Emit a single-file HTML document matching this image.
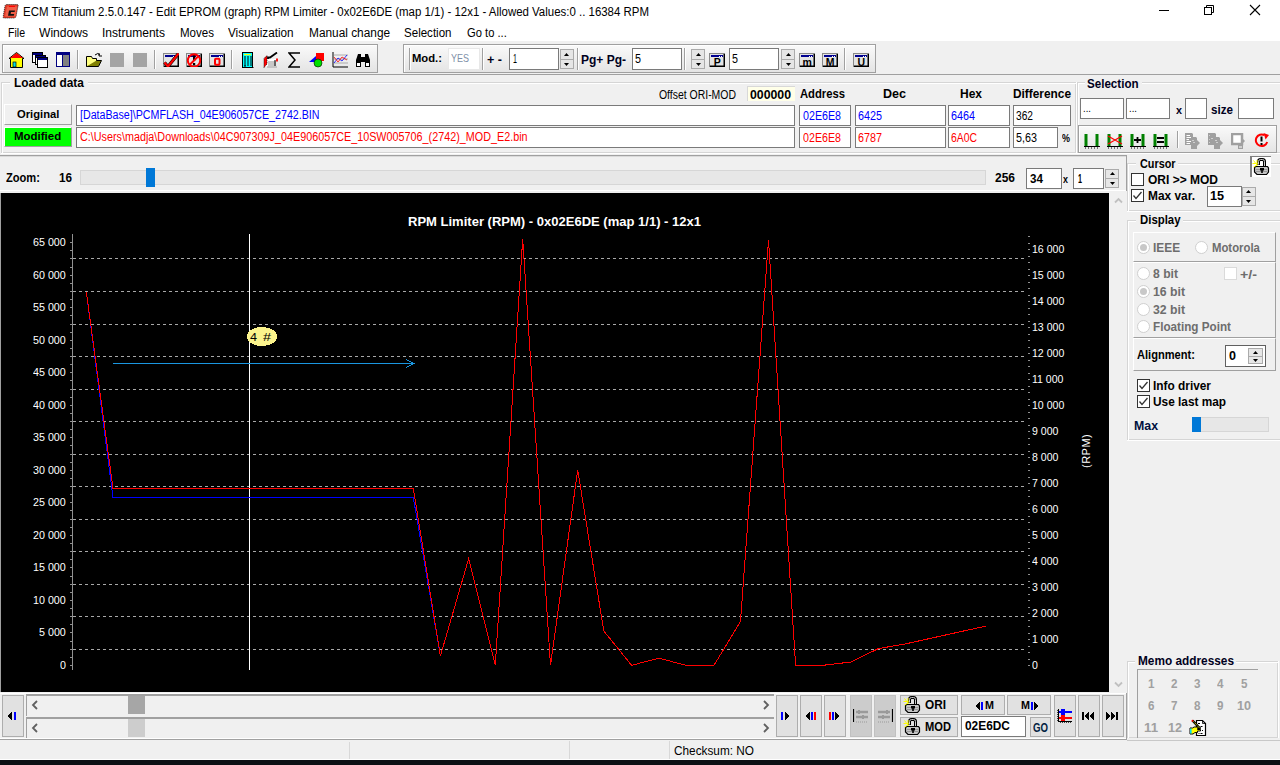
<!DOCTYPE html><html><head><meta charset="utf-8"><style>html,body{margin:0;padding:0;width:1280px;height:765px;overflow:hidden;background:#f0f0f0;font-family:"Liberation Sans",sans-serif;}body{position:relative}</style></head><body>
<div style="position:absolute;left:0px;top:0px;width:1280px;height:41px;box-sizing:border-box;background:#fff"></div>
<div style="position:absolute;left:23.00px;top:5.82px;font-size:12.5px;line-height:12.5px;font-weight:normal;color:#000;white-space:nowrap;transform-origin:0 0;transform:scale(0.9160,1.0);">ECM Titanium 2.5.0.147 - Edit EPROM (graph) RPM Limiter - 0x02E6DE (map 1/1) - 12x1 - Allowed Values:0 .. 16384 RPM</div>
<svg style="position:absolute;left:2px;top:3px;shape-rendering:auto" width="17" height="16" viewBox="0 0 17 16" shape-rendering="crispEdges"><path d="M4.5 1.5H15.5Q16.5 1.5 16 3L14 13.5Q13.5 15 12 15H2Q0.8 15 1.2 13.5L3 3Q3.3 1.5 4.5 1.5z" fill="#e23a26" stroke="#222" stroke-width="0.8" stroke-dasharray="1.2 0.8"/><path d="M5 3.5H15L13.5 13.5H3z" fill="#f06048"/><path d="M7 3.5H13" stroke="#ff0000" stroke-width="1"/><path d="M7 7.5H13L12.6 9H9L8.6 11H12.2L11.8 12.8H6z" fill="#111"/></svg>
<div style="position:absolute;left:1159px;top:10px;width:10px;height:1px;box-sizing:border-box;background:#000"></div>
<svg style="position:absolute;left:1200px;top:2px;shape-rendering:auto" width="18" height="16" viewBox="0 0 18 16" shape-rendering="crispEdges"><rect x="4.5" y="5.5" width="7" height="7" fill="none" stroke="#000"/><path d="M6.5 5.5v-2h7v7h-2" fill="none" stroke="#000"/></svg>
<svg style="position:absolute;left:1248px;top:3px;shape-rendering:auto" width="14" height="14" viewBox="0 0 14 14" shape-rendering="crispEdges"><path d="M2 2L12 12M12 2L2 12" stroke="#000" stroke-width="1.1"/></svg>
<div style="position:absolute;left:8.00px;top:26.82px;font-size:12.5px;line-height:12.5px;font-weight:normal;color:#000;white-space:nowrap;transform-origin:0 0;transform:scale(0.8458,1.0);">File</div>
<div style="position:absolute;left:39.00px;top:26.82px;font-size:12.5px;line-height:12.5px;font-weight:normal;color:#000;white-space:nowrap;transform-origin:0 0;transform:scale(0.9665,1.0);">Windows</div>
<div style="position:absolute;left:102.00px;top:26.82px;font-size:12.5px;line-height:12.5px;font-weight:normal;color:#000;white-space:nowrap;transform-origin:0 0;transform:scale(0.9648,1.0);">Instruments</div>
<div style="position:absolute;left:180.00px;top:26.82px;font-size:12.5px;line-height:12.5px;font-weight:normal;color:#000;white-space:nowrap;transform-origin:0 0;transform:scale(0.9239,1.0);">Moves</div>
<div style="position:absolute;left:228.00px;top:26.82px;font-size:12.5px;line-height:12.5px;font-weight:normal;color:#000;white-space:nowrap;transform-origin:0 0;transform:scale(0.9371,1.0);">Visualization</div>
<div style="position:absolute;left:308.50px;top:26.82px;font-size:12.5px;line-height:12.5px;font-weight:normal;color:#000;white-space:nowrap;transform-origin:0 0;transform:scale(0.9485,1.0);">Manual change</div>
<div style="position:absolute;left:404.00px;top:26.82px;font-size:12.5px;line-height:12.5px;font-weight:normal;color:#000;white-space:nowrap;transform-origin:0 0;transform:scale(0.9241,1.0);">Selection</div>
<div style="position:absolute;left:466.50px;top:26.82px;font-size:12.5px;line-height:12.5px;font-weight:normal;color:#000;white-space:nowrap;transform-origin:0 0;transform:scale(0.8944,1.0);">Go to ...</div>
<div style="position:absolute;left:0px;top:41px;width:1280px;height:34px;box-sizing:border-box;background:#f0f0f0"></div>
<div style="position:absolute;left:0px;top:74px;width:1280px;height:1px;box-sizing:border-box;background:#a0a0a0"></div>
<div style="position:absolute;left:2px;top:44px;width:376px;height:29px;box-sizing:border-box;border:1px solid #a0a0a0;background:#fff"></div>
<div style="position:absolute;left:3px;top:45px;width:374px;height:27px;box-sizing:border-box;border-left:1px solid #fff;border-top:1px solid #fff;background:linear-gradient(#f9f9f9,#e4e4e4)"></div>
<div style="position:absolute;left:403px;top:44px;width:473px;height:29px;box-sizing:border-box;border:1px solid #a0a0a0;background:#fff"></div>
<div style="position:absolute;left:404px;top:45px;width:471px;height:27px;box-sizing:border-box;border-left:1px solid #fff;border-top:1px solid #fff;background:linear-gradient(#f9f9f9,#e4e4e4)"></div>
<div style="position:absolute;left:77px;top:50px;width:1px;height:19px;box-sizing:border-box;background:#a0a0a0"></div>
<div style="position:absolute;left:78px;top:50px;width:1px;height:19px;box-sizing:border-box;background:#fff"></div>
<div style="position:absolute;left:154px;top:50px;width:1px;height:19px;box-sizing:border-box;background:#a0a0a0"></div>
<div style="position:absolute;left:155px;top:50px;width:1px;height:19px;box-sizing:border-box;background:#fff"></div>
<div style="position:absolute;left:231px;top:50px;width:1px;height:19px;box-sizing:border-box;background:#a0a0a0"></div>
<div style="position:absolute;left:232px;top:50px;width:1px;height:19px;box-sizing:border-box;background:#fff"></div>
<svg style="position:absolute;left:9px;top:52px;shape-rendering:auto" width="16" height="16" viewBox="0 0 16 16" shape-rendering="crispEdges"><path d="M7.5 0.5L15 6.5H13.5V15.5H1.5V6.5H0z" fill="#ffff00" stroke="#000"/><path d="M7.5 1L14 6H1z" fill="#f00"/><rect x="4" y="10" width="3" height="5" fill="#00e0e0" stroke="#000" stroke-width="0.7"/></svg>
<svg style="position:absolute;left:32px;top:52px;shape-rendering:auto" width="16" height="16" viewBox="0 0 16 16" shape-rendering="crispEdges"><rect x="0.5" y="0.5" width="10" height="10" fill="#fff" stroke="#000"/><rect x="1" y="1" width="9" height="2" fill="#000080"/><rect x="3.5" y="3.5" width="10" height="9" fill="#fff" stroke="#000"/><rect x="4" y="4" width="9" height="2" fill="#000080"/><rect x="5.5" y="5.5" width="10" height="10" fill="#fff" stroke="#000"/><rect x="6" y="6" width="9" height="2" fill="#000080"/></svg>
<svg style="position:absolute;left:56px;top:52px;shape-rendering:auto" width="16" height="16" viewBox="0 0 16 16" shape-rendering="crispEdges"><rect x="0.5" y="0.5" width="13" height="14" fill="#fff" stroke="#000080"/><rect x="1" y="1" width="12" height="2" fill="#000080"/><rect x="7" y="3" width="6" height="11" fill="#808080"/><rect x="6" y="1" width="1" height="14" fill="#000080"/></svg>
<svg style="position:absolute;left:86px;top:52px;shape-rendering:auto" width="16" height="16" viewBox="0 0 16 16" shape-rendering="crispEdges"><path d="M0.5 6.5V14.5H12.5L15.5 8.5H3.5L0.5 14.5" fill="#808000" stroke="#000"/><path d="M0.5 14.5V4.5H5.5L6.5 6.5H10.5V8.5" fill="#ffff80" stroke="#000"/><path d="M9 3Q12 0 14 3" fill="none" stroke="#000"/><path d="M13 1V4H16" fill="none" stroke="#000"/></svg>
<svg style="position:absolute;left:242px;top:52px;shape-rendering:auto" width="16" height="16" viewBox="0 0 16 16" shape-rendering="crispEdges"><rect x="0.5" y="0.5" width="10" height="15" fill="#00ffff" stroke="#000"/><rect x="1" y="15" width="10.5" height="1" fill="#000"/><rect x="2" y="2" width="7" height="1.2" fill="#ffff00"/><path d="M3 4V14M6 4V14M9 4V14" stroke="#000" stroke-width="1"/><path d="M2 14H4" stroke="#000"/></svg>
<svg style="position:absolute;left:263px;top:52px;shape-rendering:auto" width="16" height="16" viewBox="0 0 16 16" shape-rendering="crispEdges"><path d="M4 14.5L6 13.5H13V7H6V3L1 6V15z" fill="#fff"/><path d="M1 15.5V6.5L4 3.5V12z" fill="#ff0000" stroke="#000" stroke-width="0.8" stroke-dasharray="1 1"/><rect x="5" y="9" width="8" height="5" fill="#c8c8c8"/><path d="M4 15H14" stroke="#a0a0a0" stroke-width="1"/><path d="M5 7V5.5H7L14 0.5" fill="none" stroke="#000" stroke-width="1.8"/><path d="M14 6.5V9.5" stroke="#ff0000" stroke-width="1.8"/><path d="M12 8V14" stroke="#000" stroke-width="1"/></svg>
<svg style="position:absolute;left:288px;top:52px;shape-rendering:auto" width="16" height="16" viewBox="0 0 16 16" shape-rendering="crispEdges"><path d="M12 1H1L7 8L1 15H12" fill="none" stroke="#000" stroke-width="1.5"/></svg>
<svg style="position:absolute;left:309px;top:52px;shape-rendering:auto" width="16" height="16" viewBox="0 0 16 16" shape-rendering="crispEdges"><rect x="7" y="1" width="8" height="8" fill="#f00"/><path d="M0 10L7 4V10z" fill="#0000ff"/><circle cx="9" cy="11" r="4" fill="#00e000" stroke="#000" stroke-width="0.6"/></svg>
<svg style="position:absolute;left:332px;top:52px;shape-rendering:auto" width="16" height="16" viewBox="0 0 16 16" shape-rendering="crispEdges"><path d="M1 0V15H16" fill="none" stroke="#000"/><path d="M1 3H16M1 7H16M1 11H16" stroke="#808080" stroke-width="0.6"/><path d="M2 11L6 6L10 9L15 3" fill="none" stroke="#00f" stroke-width="0.8"/><path d="M2 5L6 10L10 5L15 8" fill="none" stroke="#f00" stroke-width="0.8"/></svg>
<svg style="position:absolute;left:355px;top:52px;shape-rendering:auto" width="16" height="16" viewBox="0 0 16 16" shape-rendering="crispEdges"><path d="M1 15V8L3 2H6V15z M10 15V2H13L15 8V15z" fill="#000"/><rect x="6" y="5" width="4" height="5" fill="#000"/><rect x="2" y="11" width="3" height="3" fill="#fff"/><rect x="11" y="11" width="3" height="3" fill="#fff"/></svg>
<svg style="position:absolute;left:110px;top:53px;shape-rendering:auto" width="16" height="16" viewBox="0 0 16 16" shape-rendering="crispEdges"><rect x="0" y="0" width="14" height="14" fill="#a4a4a4"/></svg>
<svg style="position:absolute;left:133px;top:53px;shape-rendering:auto" width="16" height="16" viewBox="0 0 16 16" shape-rendering="crispEdges"><rect x="0" y="0" width="14" height="14" fill="#a4a4a4"/></svg>
<svg style="position:absolute;left:163px;top:53px;shape-rendering:auto" width="16" height="14" viewBox="0 0 16 14" shape-rendering="crispEdges"><rect x="0" y="0" width="16" height="14" fill="#888"/><rect x="1" y="1" width="15" height="13" fill="#000"/><rect x="1" y="1" width="13.5" height="11.5" fill="#e4e4e4"/><rect x="2" y="2" width="12" height="2" fill="#000090"/><rect x="10" y="3" width="1" height="1" fill="#fff"/><rect x="12" y="3" width="1" height="1" fill="#fff"/><path d="M1.5 9.5L5 13.5L15.5 0.5" fill="none" stroke="#000" stroke-width="3.2"/><path d="M1.5 9.5L5 13.5L15.5 0.5" fill="none" stroke="#f00" stroke-width="2.2"/></svg>
<svg style="position:absolute;left:186px;top:53px;shape-rendering:auto" width="16" height="14" viewBox="0 0 16 14" shape-rendering="crispEdges"><rect x="0" y="0" width="16" height="14" fill="#888"/><rect x="1" y="1" width="15" height="13" fill="#000"/><rect x="1" y="1" width="13.5" height="11.5" fill="#e4e4e4"/><rect x="2" y="2" width="12" height="2" fill="#000090"/><rect x="10" y="3" width="1" height="1" fill="#fff"/><rect x="12" y="3" width="1" height="1" fill="#fff"/><rect x="7" y="1" width="2.2" height="7" fill="#000"/><rect x="7" y="10" width="2.2" height="2.2" fill="#000"/><circle cx="8" cy="7.5" r="6.2" fill="none" stroke="#f00" stroke-width="2"/><path d="M3.5 12L12.5 3" stroke="#f00" stroke-width="2"/></svg>
<svg style="position:absolute;left:209px;top:53px;shape-rendering:auto" width="16" height="14" viewBox="0 0 16 14" shape-rendering="crispEdges"><rect x="0" y="0" width="16" height="14" fill="#888"/><rect x="1" y="1" width="15" height="13" fill="#000"/><rect x="1" y="1" width="13.5" height="11.5" fill="#e4e4e4"/><rect x="2" y="2" width="12" height="2" fill="#000090"/><rect x="10" y="3" width="1" height="1" fill="#fff"/><rect x="12" y="3" width="1" height="1" fill="#fff"/><rect x="6" y="5.8" width="4.5" height="6" rx="1" fill="none" stroke="#f00" stroke-width="2"/></svg>
<div style="position:absolute;left:409px;top:48px;width:1px;height:22px;box-sizing:border-box;background:#a0a0a0"></div>
<div style="position:absolute;left:410px;top:48px;width:1px;height:22px;box-sizing:border-box;background:#fff"></div>
<div style="position:absolute;left:482px;top:48px;width:1px;height:22px;box-sizing:border-box;background:#a0a0a0"></div>
<div style="position:absolute;left:483px;top:48px;width:1px;height:22px;box-sizing:border-box;background:#fff"></div>
<div style="position:absolute;left:577px;top:48px;width:1px;height:22px;box-sizing:border-box;background:#a0a0a0"></div>
<div style="position:absolute;left:578px;top:48px;width:1px;height:22px;box-sizing:border-box;background:#fff"></div>
<div style="position:absolute;left:684px;top:48px;width:1px;height:22px;box-sizing:border-box;background:#a0a0a0"></div>
<div style="position:absolute;left:685px;top:48px;width:1px;height:22px;box-sizing:border-box;background:#fff"></div>
<div style="position:absolute;left:844px;top:48px;width:1px;height:22px;box-sizing:border-box;background:#a0a0a0"></div>
<div style="position:absolute;left:845px;top:48px;width:1px;height:22px;box-sizing:border-box;background:#fff"></div>
<div style="position:absolute;left:412.00px;top:52.97px;font-size:11.5px;line-height:11.5px;font-weight:bold;color:#000;white-space:nowrap;transform-origin:0 0;transform:scale(0.9772,1.0);">Mod.:</div>
<div style="position:absolute;left:448px;top:48px;width:32px;height:22px;box-sizing:border-box;background:#fff;border:1px solid #e8e8e8"></div>
<div style="position:absolute;left:451.00px;top:53.05px;font-size:11px;line-height:11px;font-weight:normal;color:#8090a8;white-space:nowrap;transform-origin:0 0;transform:scale(0.8182,1.0);">YES</div>
<div style="position:absolute;left:487.00px;top:53.90px;font-size:12px;line-height:12px;font-weight:bold;color:#000020;white-space:nowrap;transform-origin:0 0;transform:scale(1.0490,1.0);">+ -</div>
<div style="position:absolute;left:509px;top:48px;width:50px;height:22px;box-sizing:border-box;background:#fff;border:1px solid #7a7a7a"></div>
<div style="position:absolute;left:513.00px;top:52.90px;font-size:12px;line-height:12px;font-weight:normal;color:#000;white-space:nowrap;transform-origin:0 0;transform:scale(0.5970,1.0);">1</div>
<div style="position:absolute;left:560px;top:49px;width:14px;height:20px;box-sizing:border-box;background:#e6e6e6;border:1px solid #ababab"></div>
<div style="position:absolute;left:560px;top:59px;width:14px;height:1px;box-sizing:border-box;background:#ababab"></div>
<svg style="position:absolute;left:564px;top:53px;shape-rendering:auto" width="5" height="3" viewBox="0 0 5 3" shape-rendering="crispEdges"><path d="M2.5 0L5 3H0z" fill="#000"/></svg>
<svg style="position:absolute;left:564px;top:63px;shape-rendering:auto" width="5" height="3" viewBox="0 0 5 3" shape-rendering="crispEdges"><path d="M0 0H5L2.5 3z" fill="#000"/></svg>
<div style="position:absolute;left:581.00px;top:53.90px;font-size:12px;line-height:12px;font-weight:bold;color:#000020;white-space:nowrap;transform-origin:0 0;transform:scale(1.0000,1.0);">Pg+ Pg-</div>
<div style="position:absolute;left:632px;top:48px;width:50px;height:22px;box-sizing:border-box;background:#fff;border:1px solid #7a7a7a"></div>
<div style="position:absolute;left:635.00px;top:52.90px;font-size:12px;line-height:12px;font-weight:normal;color:#000;white-space:nowrap;transform-origin:0 0;transform:scale(0.8955,1.0);">5</div>
<div style="position:absolute;left:691px;top:49px;width:14px;height:20px;box-sizing:border-box;background:#e6e6e6;border:1px solid #ababab"></div>
<div style="position:absolute;left:691px;top:59px;width:14px;height:1px;box-sizing:border-box;background:#ababab"></div>
<svg style="position:absolute;left:696px;top:53px;shape-rendering:auto" width="5" height="3" viewBox="0 0 5 3" shape-rendering="crispEdges"><path d="M2.5 0L5 3H0z" fill="#000"/></svg>
<svg style="position:absolute;left:696px;top:63px;shape-rendering:auto" width="5" height="3" viewBox="0 0 5 3" shape-rendering="crispEdges"><path d="M0 0H5L2.5 3z" fill="#000"/></svg>
<div style="position:absolute;left:729px;top:48px;width:50px;height:22px;box-sizing:border-box;background:#fff;border:1px solid #7a7a7a"></div>
<div style="position:absolute;left:732.00px;top:52.90px;font-size:12px;line-height:12px;font-weight:normal;color:#000;white-space:nowrap;transform-origin:0 0;transform:scale(0.8955,1.0);">5</div>
<div style="position:absolute;left:781px;top:49px;width:14px;height:20px;box-sizing:border-box;background:#e6e6e6;border:1px solid #ababab"></div>
<div style="position:absolute;left:781px;top:59px;width:14px;height:1px;box-sizing:border-box;background:#ababab"></div>
<svg style="position:absolute;left:786px;top:53px;shape-rendering:auto" width="5" height="3" viewBox="0 0 5 3" shape-rendering="crispEdges"><path d="M2.5 0L5 3H0z" fill="#000"/></svg>
<svg style="position:absolute;left:786px;top:63px;shape-rendering:auto" width="5" height="3" viewBox="0 0 5 3" shape-rendering="crispEdges"><path d="M0 0H5L2.5 3z" fill="#000"/></svg>
<svg style="position:absolute;left:709px;top:53px;shape-rendering:auto" width="16" height="14" viewBox="0 0 16 14" shape-rendering="crispEdges"><rect x="0" y="0" width="16" height="14" fill="#888"/><rect x="1" y="1" width="15" height="13" fill="#000"/><rect x="1" y="1" width="13.5" height="11.5" fill="#e4e4e4"/><rect x="2" y="2" width="12" height="2" fill="#000090"/><rect x="10" y="3" width="1" height="1" fill="#fff"/><rect x="12" y="3" width="1" height="1" fill="#fff"/><text x="8.2" y="12.5" font-family="Liberation Sans" font-weight="bold" font-size="10.5" text-anchor="middle" fill="#000">P</text></svg>
<svg style="position:absolute;left:799px;top:53px;shape-rendering:auto" width="16" height="14" viewBox="0 0 16 14" shape-rendering="crispEdges"><rect x="0" y="0" width="16" height="14" fill="#888"/><rect x="1" y="1" width="15" height="13" fill="#000"/><rect x="1" y="1" width="13.5" height="11.5" fill="#e4e4e4"/><rect x="2" y="2" width="12" height="2" fill="#000090"/><rect x="10" y="3" width="1" height="1" fill="#fff"/><rect x="12" y="3" width="1" height="1" fill="#fff"/><text x="8.2" y="12.5" font-family="Liberation Sans" font-weight="bold" font-size="10.5" text-anchor="middle" fill="#000">m</text></svg>
<svg style="position:absolute;left:822px;top:53px;shape-rendering:auto" width="16" height="14" viewBox="0 0 16 14" shape-rendering="crispEdges"><rect x="0" y="0" width="16" height="14" fill="#888"/><rect x="1" y="1" width="15" height="13" fill="#000"/><rect x="1" y="1" width="13.5" height="11.5" fill="#e4e4e4"/><rect x="2" y="2" width="12" height="2" fill="#000090"/><rect x="10" y="3" width="1" height="1" fill="#fff"/><rect x="12" y="3" width="1" height="1" fill="#fff"/><text x="8.2" y="12.5" font-family="Liberation Sans" font-weight="bold" font-size="10.5" text-anchor="middle" fill="#000">M</text></svg>
<svg style="position:absolute;left:853px;top:53px;shape-rendering:auto" width="16" height="14" viewBox="0 0 16 14" shape-rendering="crispEdges"><rect x="0" y="0" width="16" height="14" fill="#888"/><rect x="1" y="1" width="15" height="13" fill="#000"/><rect x="1" y="1" width="13.5" height="11.5" fill="#e4e4e4"/><rect x="2" y="2" width="12" height="2" fill="#000090"/><rect x="10" y="3" width="1" height="1" fill="#fff"/><rect x="12" y="3" width="1" height="1" fill="#fff"/><text x="8.2" y="12.5" font-family="Liberation Sans" font-weight="bold" font-size="10.5" text-anchor="middle" fill="#000">U</text></svg>
<div style="position:absolute;left:0px;top:75px;width:1280px;height:80px;box-sizing:border-box;background:#f0f0f0"></div>
<div style="position:absolute;left:1px;top:82px;width:1075px;height:71px;box-sizing:border-box;border:1px solid #d5d5d5"></div>
<div style="position:absolute;left:2px;top:83px;width:1075px;height:71px;box-sizing:border-box;border:1px solid #fff;border-right:none;border-bottom:none"></div>
<div style="position:absolute;left:1px;top:153px;width:1076px;height:1px;box-sizing:border-box;background:#fff"></div>
<div style="position:absolute;left:1076px;top:82px;width:1px;height:72px;box-sizing:border-box;background:#fff"></div>
<div style="position:absolute;left:10px;top:79px;width:78px;height:6px;box-sizing:border-box;background:#f0f0f0"></div>
<div style="position:absolute;left:14.00px;top:76.90px;font-size:12px;line-height:12px;font-weight:bold;color:#000;white-space:nowrap;transform-origin:0 0;transform:scale(0.9887,1.0);">Loaded data</div>
<div style="position:absolute;left:4px;top:104px;width:68px;height:21px;box-sizing:border-box;background:#f0f0f0;border:1px solid #fff;border-right-color:#a0a0a0;border-bottom-color:#a0a0a0"></div>
<div style="position:absolute;left:17.00px;top:108.97px;font-size:11.5px;line-height:11.5px;font-weight:bold;color:#000;white-space:nowrap;transform-origin:0 0;transform:scale(0.9747,1.0);">Original</div>
<div style="position:absolute;left:4px;top:127px;width:68px;height:20px;box-sizing:border-box;background:#00ff00;border:1px solid #fff;border-right-color:#a0a0a0;border-bottom-color:#a0a0a0"></div>
<div style="position:absolute;left:14.00px;top:130.97px;font-size:11.5px;line-height:11.5px;font-weight:bold;color:#000;white-space:nowrap;transform-origin:0 0;transform:scale(0.9979,1.0);">Modified</div>
<div style="position:absolute;left:76px;top:105px;width:719px;height:21px;box-sizing:border-box;background:#fff;border:1px solid #7a7a7a"></div>
<div style="position:absolute;left:76px;top:127px;width:719px;height:21px;box-sizing:border-box;background:#fff;border:1px solid #7a7a7a"></div>
<div style="position:absolute;left:79.50px;top:109.40px;font-size:12px;line-height:12px;font-weight:normal;color:#0000ff;white-space:nowrap;transform-origin:0 0;transform:scale(0.8887,1.0);">[DataBase]\PCMFLASH_04E906057CE_2742.BIN</div>
<div style="position:absolute;left:79.50px;top:131.40px;font-size:12px;line-height:12px;font-weight:normal;color:#ff0000;white-space:nowrap;transform-origin:0 0;transform:scale(0.8993,1.0);">C:\Users\madja\Downloads\04C907309J_04E906057CE_10SW005706_(2742)_MOD_E2.bin</div>
<div style="position:absolute;left:659.00px;top:88.90px;font-size:12px;line-height:12px;font-weight:normal;color:#000;white-space:nowrap;transform-origin:0 0;transform:scale(0.8701,1.0);">Offset ORI-MOD</div>
<div style="position:absolute;left:747px;top:86px;width:48px;height:15px;box-sizing:border-box;background:#ffffe8;border-left:1px solid #d8d8d8;border-top:1px solid #d8d8d8"></div>
<div style="position:absolute;left:750.00px;top:88.90px;font-size:12px;line-height:12px;font-weight:bold;color:#000;white-space:nowrap;transform-origin:0 0;transform:scale(1.0250,1.0);">000000</div>
<div style="position:absolute;left:800.00px;top:88.40px;font-size:12px;line-height:12px;font-weight:bold;color:#000;white-space:nowrap;transform-origin:0 0;transform:scale(0.9375,1.0);">Address</div>
<div style="position:absolute;left:883.00px;top:88.40px;font-size:12px;line-height:12px;font-weight:bold;color:#000;white-space:nowrap;transform-origin:0 0;transform:scale(1.0455,1.0);">Dec</div>
<div style="position:absolute;left:960.00px;top:88.40px;font-size:12px;line-height:12px;font-weight:bold;color:#000;white-space:nowrap;transform-origin:0 0;transform:scale(1.0000,1.0);">Hex</div>
<div style="position:absolute;left:1013.00px;top:88.40px;font-size:12px;line-height:12px;font-weight:bold;color:#000;white-space:nowrap;transform-origin:0 0;transform:scale(0.9881,1.0);">Difference</div>
<div style="position:absolute;left:799px;top:105px;width:52px;height:21px;box-sizing:border-box;background:#fff;border:1px solid #7a7a7a"></div>
<div style="position:absolute;left:799px;top:127px;width:52px;height:21px;box-sizing:border-box;background:#fff;border:1px solid #7a7a7a"></div>
<div style="position:absolute;left:855px;top:105px;width:91px;height:21px;box-sizing:border-box;background:#fff;border:1px solid #7a7a7a"></div>
<div style="position:absolute;left:855px;top:127px;width:91px;height:21px;box-sizing:border-box;background:#fff;border:1px solid #7a7a7a"></div>
<div style="position:absolute;left:948px;top:105px;width:62px;height:21px;box-sizing:border-box;background:#fff;border:1px solid #7a7a7a"></div>
<div style="position:absolute;left:948px;top:127px;width:62px;height:21px;box-sizing:border-box;background:#fff;border:1px solid #7a7a7a"></div>
<div style="position:absolute;left:1013px;top:105px;width:58px;height:21px;box-sizing:border-box;background:#fff;border:1px solid #7a7a7a"></div>
<div style="position:absolute;left:1013px;top:127px;width:45px;height:21px;box-sizing:border-box;background:#fff;border:1px solid #7a7a7a"></div>
<div style="position:absolute;left:803.00px;top:109.90px;font-size:12px;line-height:12px;font-weight:normal;color:#0000ff;white-space:nowrap;transform-origin:0 0;transform:scale(0.8899,1.0);">02E6E8</div>
<div style="position:absolute;left:803.00px;top:131.90px;font-size:12px;line-height:12px;font-weight:normal;color:#ff0000;white-space:nowrap;transform-origin:0 0;transform:scale(0.8899,1.0);">02E6E8</div>
<div style="position:absolute;left:858.00px;top:109.90px;font-size:12px;line-height:12px;font-weight:normal;color:#0000ff;white-space:nowrap;transform-origin:0 0;transform:scale(0.8989,1.0);">6425</div>
<div style="position:absolute;left:858.00px;top:131.90px;font-size:12px;line-height:12px;font-weight:normal;color:#ff0000;white-space:nowrap;transform-origin:0 0;transform:scale(0.8989,1.0);">6787</div>
<div style="position:absolute;left:951.00px;top:109.90px;font-size:12px;line-height:12px;font-weight:normal;color:#0000ff;white-space:nowrap;transform-origin:0 0;transform:scale(0.8989,1.0);">6464</div>
<div style="position:absolute;left:951.00px;top:131.90px;font-size:12px;line-height:12px;font-weight:normal;color:#ff0000;white-space:nowrap;transform-origin:0 0;transform:scale(0.8667,1.0);">6A0C</div>
<div style="position:absolute;left:1016.00px;top:109.90px;font-size:12px;line-height:12px;font-weight:normal;color:#000;white-space:nowrap;transform-origin:0 0;transform:scale(0.8500,1.0);">362</div>
<div style="position:absolute;left:1016.00px;top:131.90px;font-size:12px;line-height:12px;font-weight:normal;color:#000;white-space:nowrap;transform-origin:0 0;transform:scale(0.8974,1.0);">5,63</div>
<div style="position:absolute;left:1062.00px;top:133.05px;font-size:11px;line-height:11px;font-weight:bold;color:#000;white-space:nowrap;transform-origin:0 0;transform:scale(0.8163,1.0);">%</div>
<div style="position:absolute;left:1077px;top:82px;width:205px;height:71px;box-sizing:border-box;border:1px solid #d5d5d5"></div>
<div style="position:absolute;left:1078px;top:83px;width:205px;height:71px;box-sizing:border-box;border:1px solid #fff;border-right:none;border-bottom:none"></div>
<div style="position:absolute;left:1077px;top:153px;width:206px;height:1px;box-sizing:border-box;background:#fff"></div>
<div style="position:absolute;left:1282px;top:82px;width:1px;height:72px;box-sizing:border-box;background:#fff"></div>
<div style="position:absolute;left:1085px;top:79px;width:57px;height:6px;box-sizing:border-box;background:#f0f0f0"></div>
<div style="position:absolute;left:1087.00px;top:77.90px;font-size:12px;line-height:12px;font-weight:bold;color:#000020;white-space:nowrap;transform-origin:0 0;transform:scale(0.9663,1.0);">Selection</div>
<div style="position:absolute;left:1080px;top:98px;width:44px;height:21px;box-sizing:border-box;background:#fff;border:1px solid #7a7a7a"></div>
<div style="position:absolute;left:1126px;top:98px;width:44px;height:21px;box-sizing:border-box;background:#fff;border:1px solid #7a7a7a"></div>
<div style="position:absolute;left:1185px;top:98px;width:22px;height:21px;box-sizing:border-box;background:#fff;border:1px solid #7a7a7a"></div>
<div style="position:absolute;left:1238px;top:98px;width:36px;height:21px;box-sizing:border-box;background:#fff;border:1px solid #7a7a7a"></div>
<div style="position:absolute;left:1083.00px;top:103.05px;font-size:11px;line-height:11px;font-weight:normal;color:#000;white-space:nowrap;transform-origin:0 0;transform:scale(0.8696,1.0);">...</div>
<div style="position:absolute;left:1129.00px;top:103.05px;font-size:11px;line-height:11px;font-weight:normal;color:#000;white-space:nowrap;transform-origin:0 0;transform:scale(0.8696,1.0);">...</div>
<div style="position:absolute;left:1176.00px;top:105.05px;font-size:11px;line-height:11px;font-weight:bold;color:#000020;white-space:nowrap;transform-origin:0 0;transform:scale(0.9836,1.0);">x</div>
<div style="position:absolute;left:1211.00px;top:103.90px;font-size:12px;line-height:12px;font-weight:bold;color:#000020;white-space:nowrap;transform-origin:0 0;transform:scale(0.9692,1.0);">size</div>
<div style="position:absolute;left:1078px;top:125px;width:199px;height:28px;box-sizing:border-box;border:1px solid #a0a0a0;background:#fff"></div>
<div style="position:absolute;left:1079px;top:126px;width:197px;height:26px;box-sizing:border-box;border-left:1px solid #fff;border-top:1px solid #fff;background:linear-gradient(#f9f9f9,#e4e4e4)"></div>
<svg style="position:absolute;left:1084px;top:133px;shape-rendering:auto" width="16" height="16" viewBox="0 0 16 16" shape-rendering="crispEdges"><path d="M2 1V13M13 1V13" fill="none" stroke="#008000" stroke-width="3"/><path d="M0 13.5H16" stroke="#000"/><path d="M1 15H2M4 15H5M7 15H8M10 15H11M13 15H14" stroke="#000"/></svg>
<svg style="position:absolute;left:1107px;top:133px;shape-rendering:auto" width="16" height="16" viewBox="0 0 16 16" shape-rendering="crispEdges"><path d="M2 1V13M13 1V13" fill="none" stroke="#008000" stroke-width="3"/><path d="M0 13.5H16" stroke="#000"/><path d="M1 15H2M4 15H5M7 15H8M10 15H11M13 15H14" stroke="#000"/><path d="M1 3L15 11M1 11L15 3" stroke="#f00" stroke-width="1.2"/></svg>
<svg style="position:absolute;left:1130px;top:133px;shape-rendering:auto" width="16" height="16" viewBox="0 0 16 16" shape-rendering="crispEdges"><path d="M2 1V13M13 1V13" fill="none" stroke="#008000" stroke-width="3"/><path d="M0 13.5H16" stroke="#000"/><path d="M1 15H2M4 15H5M7 15H8M10 15H11M13 15H14" stroke="#000"/><path d="M4 7H11M7.5 4V10" stroke="#000" stroke-width="1.8"/></svg>
<svg style="position:absolute;left:1153px;top:133px;shape-rendering:auto" width="16" height="16" viewBox="0 0 16 16" shape-rendering="crispEdges"><path d="M2 1V13M13 1V13" fill="none" stroke="#008000" stroke-width="3"/><path d="M0 13.5H16" stroke="#000"/><path d="M1 15H2M4 15H5M7 15H8M10 15H11M13 15H14" stroke="#000"/><path d="M4 5H11M4 9H11" stroke="#000" stroke-width="1.8"/></svg>
<div style="position:absolute;left:1177px;top:131px;width:1px;height:17px;box-sizing:border-box;background:#a0a0a0"></div>
<div style="position:absolute;left:1178px;top:131px;width:1px;height:17px;box-sizing:border-box;background:#fff"></div>
<svg style="position:absolute;left:1185px;top:133px;shape-rendering:auto" width="16" height="16" viewBox="0 0 16 16" shape-rendering="crispEdges"><path d="M0 0H7L8 1V4H11L12 5V16H6V12H0z" fill="#a0a0a0"/><path d="M1.5 2.5H5M1.5 4.5H6M1.5 6.5H4M1.5 8.5H6M1.5 10.5H5" stroke="#fff" stroke-width="1"/><path d="M12 7L15 10L12 13z" fill="#a0a0a0"/><path d="M8 7V8M9 9V10" stroke="#fff"/></svg>
<svg style="position:absolute;left:1208px;top:133px;shape-rendering:auto" width="16" height="16" viewBox="0 0 16 16" shape-rendering="crispEdges"><path d="M0 0H7L8 1V4H11L12 5V16H6V12H0z" fill="#a0a0a0"/><path d="M1.5 2.5V3M1.5 6.5V7M1.5 9.5V10M4 5V6" stroke="#fff" stroke-width="1"/><path d="M12 7L15 10L12 13z" fill="#a0a0a0"/><path d="M8 7V8M9 9V10" stroke="#fff"/></svg>
<svg style="position:absolute;left:1231px;top:133px;shape-rendering:auto" width="16" height="16" viewBox="0 0 16 16" shape-rendering="crispEdges"><rect x="1" y="1" width="10" height="10" fill="#fff" stroke="#a0a0a0" stroke-width="2.5"/><path d="M11 5L14 8L11 11z" fill="#a0a0a0"/><path d="M7 12H12V16H7z" fill="#a0a0a0"/><path d="M8 14H11" stroke="#fff"/></svg>
<svg style="position:absolute;left:1254px;top:133px;shape-rendering:auto" width="16" height="16" viewBox="0 0 16 16" shape-rendering="crispEdges"><path d="M13.2 9A5.8 5.8 0 1 1 10.5 2.2" fill="none" stroke="#f00" stroke-width="2"/><path d="M9.5 0L15 2L11.5 6.5z" fill="#f00"/><path d="M7.5 3.5V8.5" stroke="#000" stroke-width="2"/><rect x="6.5" y="10" width="2" height="2" fill="#000"/></svg>
<div style="position:absolute;left:0px;top:155px;width:1280px;height:1px;box-sizing:border-box;background:#a0a0a0"></div>
<div style="position:absolute;left:0px;top:156px;width:1280px;height:1px;box-sizing:border-box;background:#dadada"></div>
<div style="position:absolute;left:0px;top:157px;width:1127px;height:34px;box-sizing:border-box;background:#f0f0f0"></div>
<div style="position:absolute;left:0px;top:190px;width:1127px;height:1px;box-sizing:border-box;background:#fff"></div>
<div style="position:absolute;left:6.00px;top:171.90px;font-size:12px;line-height:12px;font-weight:bold;color:#000;white-space:nowrap;transform-origin:0 0;transform:scale(0.9264,1.0);">Zoom:</div>
<div style="position:absolute;left:59.00px;top:171.90px;font-size:12px;line-height:12px;font-weight:bold;color:#000;white-space:nowrap;transform-origin:0 0;transform:scale(0.9774,1.0);">16</div>
<div style="position:absolute;left:80px;top:170px;width:906px;height:15px;box-sizing:border-box;background:#e7e7e7;border:1px solid #d6d6d6"></div>
<div style="position:absolute;left:146px;top:168px;width:9px;height:19px;box-sizing:border-box;background:#0078d7"></div>
<div style="position:absolute;left:995.00px;top:171.90px;font-size:12px;line-height:12px;font-weight:bold;color:#000;white-space:nowrap;transform-origin:0 0;transform:scale(1.0000,1.0);">256</div>
<div style="position:absolute;left:1026px;top:168px;width:36px;height:21px;box-sizing:border-box;background:#fff;border:1px solid #7a7a7a"></div>
<div style="position:absolute;left:1030.00px;top:172.90px;font-size:12px;line-height:12px;font-weight:bold;color:#000;white-space:nowrap;transform-origin:0 0;transform:scale(0.9701,1.0);">34</div>
<div style="position:absolute;left:1063.00px;top:175.21px;font-size:10px;line-height:10px;font-weight:bold;color:#000;white-space:nowrap;transform-origin:0 0;transform:scale(0.8929,1.0);">x</div>
<div style="position:absolute;left:1073px;top:168px;width:31px;height:21px;box-sizing:border-box;background:#fff;border:1px solid #7a7a7a"></div>
<div style="position:absolute;left:1078.00px;top:172.90px;font-size:12px;line-height:12px;font-weight:bold;color:#000;white-space:nowrap;transform-origin:0 0;transform:scale(0.5970,1.0);">1</div>
<div style="position:absolute;left:1105px;top:169px;width:14px;height:19px;box-sizing:border-box;background:#e6e6e6;border:1px solid #ababab"></div>
<div style="position:absolute;left:1105px;top:178px;width:14px;height:1px;box-sizing:border-box;background:#ababab"></div>
<svg style="position:absolute;left:1110px;top:172px;shape-rendering:auto" width="5" height="3" viewBox="0 0 5 3" shape-rendering="crispEdges"><path d="M2.5 0L5 3H0z" fill="#000"/></svg>
<svg style="position:absolute;left:1110px;top:182px;shape-rendering:auto" width="5" height="3" viewBox="0 0 5 3" shape-rendering="crispEdges"><path d="M0 0H5L2.5 3z" fill="#000"/></svg>
<div style="position:absolute;left:0px;top:193px;width:1109px;height:499px;box-sizing:border-box;background:#000;border-left:1px solid #a0a0a0"></div>
<div style="position:absolute;left:1109px;top:191px;width:18px;height:502px;box-sizing:border-box;background:#f0f0f0"></div>
<svg style="position:absolute;left:1114px;top:197px;shape-rendering:auto" width="9" height="7" viewBox="0 0 9 7" shape-rendering="crispEdges"><path d="M1 5.5L4.5 2L8 5.5" fill="none" stroke="#c0c0c0" stroke-width="1.8"/></svg>
<svg style="position:absolute;left:1114px;top:681px;shape-rendering:auto" width="9" height="7" viewBox="0 0 9 7" shape-rendering="crispEdges"><path d="M1 1.5L4.5 5L8 1.5" fill="none" stroke="#c0c0c0" stroke-width="1.8"/></svg>
<svg style="position:absolute;left:0px;top:0px;shape-rendering:crispEdges;pointer-events:none" width="1280" height="765" viewBox="0 0 1280 765" shape-rendering="crispEdges"><path d="M73 258.5H1025" stroke="#a8a8a8" stroke-dasharray="3 3"/><path d="M73 291.5H1025" stroke="#a8a8a8" stroke-dasharray="3 3"/><path d="M73 324.5H1025" stroke="#a8a8a8" stroke-dasharray="3 3"/><path d="M73 356.5H1025" stroke="#a8a8a8" stroke-dasharray="3 3"/><path d="M73 389.5H1025" stroke="#a8a8a8" stroke-dasharray="3 3"/><path d="M73 421.5H1025" stroke="#a8a8a8" stroke-dasharray="3 3"/><path d="M73 454.5H1025" stroke="#a8a8a8" stroke-dasharray="3 3"/><path d="M73 486.5H1025" stroke="#a8a8a8" stroke-dasharray="3 3"/><path d="M73 519.5H1025" stroke="#a8a8a8" stroke-dasharray="3 3"/><path d="M73 551.5H1025" stroke="#a8a8a8" stroke-dasharray="3 3"/><path d="M73 584.5H1025" stroke="#a8a8a8" stroke-dasharray="3 3"/><path d="M73 616.5H1025" stroke="#a8a8a8" stroke-dasharray="3 3"/><path d="M73 649.5H1025" stroke="#a8a8a8" stroke-dasharray="3 3"/><path d="M72.5 234V670" stroke="#909090"/><path d="M70 242.5H72" stroke="#909090"/><path d="M70 250.5H72" stroke="#909090"/><path d="M70 258.5H72" stroke="#909090"/><path d="M70 267.5H72" stroke="#909090"/><path d="M70 275.5H72" stroke="#909090"/><path d="M70 283.5H72" stroke="#909090"/><path d="M70 291.5H72" stroke="#909090"/><path d="M70 299.5H72" stroke="#909090"/><path d="M70 307.5H72" stroke="#909090"/><path d="M70 315.5H72" stroke="#909090"/><path d="M70 324.5H72" stroke="#909090"/><path d="M70 332.5H72" stroke="#909090"/><path d="M70 340.5H72" stroke="#909090"/><path d="M70 348.5H72" stroke="#909090"/><path d="M70 356.5H72" stroke="#909090"/><path d="M70 364.5H72" stroke="#909090"/><path d="M70 372.5H72" stroke="#909090"/><path d="M70 380.5H72" stroke="#909090"/><path d="M70 389.5H72" stroke="#909090"/><path d="M70 397.5H72" stroke="#909090"/><path d="M70 405.5H72" stroke="#909090"/><path d="M70 413.5H72" stroke="#909090"/><path d="M70 421.5H72" stroke="#909090"/><path d="M70 429.5H72" stroke="#909090"/><path d="M70 437.5H72" stroke="#909090"/><path d="M70 445.5H72" stroke="#909090"/><path d="M70 454.5H72" stroke="#909090"/><path d="M70 462.5H72" stroke="#909090"/><path d="M70 470.5H72" stroke="#909090"/><path d="M70 478.5H72" stroke="#909090"/><path d="M70 486.5H72" stroke="#909090"/><path d="M70 494.5H72" stroke="#909090"/><path d="M70 502.5H72" stroke="#909090"/><path d="M70 510.5H72" stroke="#909090"/><path d="M70 519.5H72" stroke="#909090"/><path d="M70 527.5H72" stroke="#909090"/><path d="M70 535.5H72" stroke="#909090"/><path d="M70 543.5H72" stroke="#909090"/><path d="M70 551.5H72" stroke="#909090"/><path d="M70 559.5H72" stroke="#909090"/><path d="M70 567.5H72" stroke="#909090"/><path d="M70 576.5H72" stroke="#909090"/><path d="M70 584.5H72" stroke="#909090"/><path d="M70 592.5H72" stroke="#909090"/><path d="M70 600.5H72" stroke="#909090"/><path d="M70 608.5H72" stroke="#909090"/><path d="M70 616.5H72" stroke="#909090"/><path d="M70 624.5H72" stroke="#909090"/><path d="M70 632.5H72" stroke="#909090"/><path d="M70 641.5H72" stroke="#909090"/><path d="M70 649.5H72" stroke="#909090"/><path d="M70 657.5H72" stroke="#909090"/><path d="M70 665.5H72" stroke="#909090"/><path d="M1028 236.5H1030" stroke="#909090"/><path d="M1028 243.5H1030" stroke="#909090"/><path d="M1028 249.5H1030" stroke="#909090"/><path d="M1028 256.5H1030" stroke="#909090"/><path d="M1028 262.5H1030" stroke="#909090"/><path d="M1028 269.5H1030" stroke="#909090"/><path d="M1028 275.5H1030" stroke="#909090"/><path d="M1028 282.5H1030" stroke="#909090"/><path d="M1028 288.5H1030" stroke="#909090"/><path d="M1028 295.5H1030" stroke="#909090"/><path d="M1028 301.5H1030" stroke="#909090"/><path d="M1028 308.5H1030" stroke="#909090"/><path d="M1028 314.5H1030" stroke="#909090"/><path d="M1028 321.5H1030" stroke="#909090"/><path d="M1028 327.5H1030" stroke="#909090"/><path d="M1028 334.5H1030" stroke="#909090"/><path d="M1028 340.5H1030" stroke="#909090"/><path d="M1028 347.5H1030" stroke="#909090"/><path d="M1028 353.5H1030" stroke="#909090"/><path d="M1028 360.5H1030" stroke="#909090"/><path d="M1028 366.5H1030" stroke="#909090"/><path d="M1028 373.5H1030" stroke="#909090"/><path d="M1028 379.5H1030" stroke="#909090"/><path d="M1028 386.5H1030" stroke="#909090"/><path d="M1028 392.5H1030" stroke="#909090"/><path d="M1028 399.5H1030" stroke="#909090"/><path d="M1028 405.5H1030" stroke="#909090"/><path d="M1028 412.5H1030" stroke="#909090"/><path d="M1028 418.5H1030" stroke="#909090"/><path d="M1028 425.5H1030" stroke="#909090"/><path d="M1028 431.5H1030" stroke="#909090"/><path d="M1028 438.5H1030" stroke="#909090"/><path d="M1028 444.5H1030" stroke="#909090"/><path d="M1028 451.5H1030" stroke="#909090"/><path d="M1028 457.5H1030" stroke="#909090"/><path d="M1028 464.5H1030" stroke="#909090"/><path d="M1028 470.5H1030" stroke="#909090"/><path d="M1028 477.5H1030" stroke="#909090"/><path d="M1028 483.5H1030" stroke="#909090"/><path d="M1028 490.5H1030" stroke="#909090"/><path d="M1028 496.5H1030" stroke="#909090"/><path d="M1028 503.5H1030" stroke="#909090"/><path d="M1028 509.5H1030" stroke="#909090"/><path d="M1028 516.5H1030" stroke="#909090"/><path d="M1028 522.5H1030" stroke="#909090"/><path d="M1028 529.5H1030" stroke="#909090"/><path d="M1028 535.5H1030" stroke="#909090"/><path d="M1028 542.5H1030" stroke="#909090"/><path d="M1028 548.5H1030" stroke="#909090"/><path d="M1028 555.5H1030" stroke="#909090"/><path d="M1028 561.5H1030" stroke="#909090"/><path d="M1028 568.5H1030" stroke="#909090"/><path d="M1028 574.5H1030" stroke="#909090"/><path d="M1028 581.5H1030" stroke="#909090"/><path d="M1028 587.5H1030" stroke="#909090"/><path d="M1028 594.5H1030" stroke="#909090"/><path d="M1028 600.5H1030" stroke="#909090"/><path d="M1028 607.5H1030" stroke="#909090"/><path d="M1028 613.5H1030" stroke="#909090"/><path d="M1028 620.5H1030" stroke="#909090"/><path d="M1028 626.5H1030" stroke="#909090"/><path d="M1028 633.5H1030" stroke="#909090"/><path d="M1028 639.5H1030" stroke="#909090"/><path d="M1028 646.5H1030" stroke="#909090"/><path d="M1028 652.5H1030" stroke="#909090"/><path d="M1028 659.5H1030" stroke="#909090"/><path d="M1028 665.5H1030" stroke="#909090"/><path d="M249.5 234V670" stroke="#fff"/><path d="M113 363.5H413M406 359.5L413.5 363.5L406 367.5" fill="none" stroke="#1a96e0"/><path d="M86.3 291.6 L113.0 497.5 L140.3 497.5 L167.6 497.5 L194.9 497.5 L222.2 497.5 L249.5 497.5 L276.8 497.5 L304.1 497.5 L331.4 497.5 L358.7 497.5 L386.0 497.5 L413.3 497.5 L440.4 656.0" fill="none" stroke="#0000ff" stroke-width="1"/><path d="M86.3 291.6 L113.0 488.5 L140.3 488.5 L167.6 488.5 L194.9 488.5 L222.2 488.5 L249.5 488.5 L276.8 488.5 L304.1 488.5 L331.4 488.5 L358.7 488.5 L386.0 488.5 L413.3 488.5 L440.4 656.0 L468.7 558.5 L495.3 665.0 L522.7 239.0 L550.5 665.3 L577.7 470.0 L603.8 631.0 L631.6 665.3 L658.9 658.2 L686.0 665.3 L714.0 665.3 L740.5 621.4 L768.5 240.0 L795.6 665.3 L823.0 665.3 L851.0 662.0 L878.3 648.6 L905.0 644.0 L932.0 638.0 L959.0 632.0 L985.6 626.2" fill="none" stroke="#ff0000" stroke-width="1"/><ellipse cx="262" cy="336.5" rx="15" ry="9.5" fill="#fbf38c"/></svg>
<div style="position:absolute;left:407.75px;top:214.74px;font-size:13px;line-height:13px;font-weight:bold;color:#fff;white-space:nowrap;transform-origin:0 0;transform:scale(1.0015,1.0);">RPM Limiter (RPM) - 0x02E6DE (map 1/1) - 12x1</div>
<div style="position:absolute;left:32.80px;top:237.25px;font-size:11px;line-height:11px;font-weight:normal;color:#fff;white-space:nowrap;transform-origin:0 0;transform:scale(0.9732,1.0);">65 000</div>
<div style="position:absolute;left:32.80px;top:269.77px;font-size:11px;line-height:11px;font-weight:normal;color:#fff;white-space:nowrap;transform-origin:0 0;transform:scale(0.9732,1.0);">60 000</div>
<div style="position:absolute;left:32.80px;top:302.29px;font-size:11px;line-height:11px;font-weight:normal;color:#fff;white-space:nowrap;transform-origin:0 0;transform:scale(0.9732,1.0);">55 000</div>
<div style="position:absolute;left:32.80px;top:334.81px;font-size:11px;line-height:11px;font-weight:normal;color:#fff;white-space:nowrap;transform-origin:0 0;transform:scale(0.9732,1.0);">50 000</div>
<div style="position:absolute;left:32.80px;top:367.33px;font-size:11px;line-height:11px;font-weight:normal;color:#fff;white-space:nowrap;transform-origin:0 0;transform:scale(0.9732,1.0);">45 000</div>
<div style="position:absolute;left:32.80px;top:399.85px;font-size:11px;line-height:11px;font-weight:normal;color:#fff;white-space:nowrap;transform-origin:0 0;transform:scale(0.9732,1.0);">40 000</div>
<div style="position:absolute;left:32.80px;top:432.37px;font-size:11px;line-height:11px;font-weight:normal;color:#fff;white-space:nowrap;transform-origin:0 0;transform:scale(0.9732,1.0);">35 000</div>
<div style="position:absolute;left:32.80px;top:464.89px;font-size:11px;line-height:11px;font-weight:normal;color:#fff;white-space:nowrap;transform-origin:0 0;transform:scale(0.9732,1.0);">30 000</div>
<div style="position:absolute;left:32.80px;top:497.41px;font-size:11px;line-height:11px;font-weight:normal;color:#fff;white-space:nowrap;transform-origin:0 0;transform:scale(0.9732,1.0);">25 000</div>
<div style="position:absolute;left:32.80px;top:529.93px;font-size:11px;line-height:11px;font-weight:normal;color:#fff;white-space:nowrap;transform-origin:0 0;transform:scale(0.9732,1.0);">20 000</div>
<div style="position:absolute;left:32.80px;top:562.45px;font-size:11px;line-height:11px;font-weight:normal;color:#fff;white-space:nowrap;transform-origin:0 0;transform:scale(0.9732,1.0);">15 000</div>
<div style="position:absolute;left:32.80px;top:594.97px;font-size:11px;line-height:11px;font-weight:normal;color:#fff;white-space:nowrap;transform-origin:0 0;transform:scale(0.9732,1.0);">10 000</div>
<div style="position:absolute;left:38.74px;top:627.49px;font-size:11px;line-height:11px;font-weight:normal;color:#fff;white-space:nowrap;transform-origin:0 0;transform:scale(0.9732,1.0);">5 000</div>
<div style="position:absolute;left:59.56px;top:660.01px;font-size:11px;line-height:11px;font-weight:normal;color:#fff;white-space:nowrap;transform-origin:0 0;transform:scale(0.9732,1.0);">0</div>
<div style="position:absolute;left:1032.00px;top:244.45px;font-size:11px;line-height:11px;font-weight:normal;color:#fff;white-space:nowrap;transform-origin:0 0;transform:scale(0.9583,1.0);">16 000</div>
<div style="position:absolute;left:1032.00px;top:270.45px;font-size:11px;line-height:11px;font-weight:normal;color:#fff;white-space:nowrap;transform-origin:0 0;transform:scale(0.9583,1.0);">15 000</div>
<div style="position:absolute;left:1032.00px;top:296.45px;font-size:11px;line-height:11px;font-weight:normal;color:#fff;white-space:nowrap;transform-origin:0 0;transform:scale(0.9583,1.0);">14 000</div>
<div style="position:absolute;left:1032.00px;top:322.45px;font-size:11px;line-height:11px;font-weight:normal;color:#fff;white-space:nowrap;transform-origin:0 0;transform:scale(0.9583,1.0);">13 000</div>
<div style="position:absolute;left:1032.00px;top:348.45px;font-size:11px;line-height:11px;font-weight:normal;color:#fff;white-space:nowrap;transform-origin:0 0;transform:scale(0.9583,1.0);">12 000</div>
<div style="position:absolute;left:1032.00px;top:374.45px;font-size:11px;line-height:11px;font-weight:normal;color:#fff;white-space:nowrap;transform-origin:0 0;transform:scale(0.9583,1.0);">11 000</div>
<div style="position:absolute;left:1032.00px;top:400.45px;font-size:11px;line-height:11px;font-weight:normal;color:#fff;white-space:nowrap;transform-origin:0 0;transform:scale(0.9583,1.0);">10 000</div>
<div style="position:absolute;left:1032.00px;top:426.45px;font-size:11px;line-height:11px;font-weight:normal;color:#fff;white-space:nowrap;transform-origin:0 0;transform:scale(0.9583,1.0);">9 000</div>
<div style="position:absolute;left:1032.00px;top:452.45px;font-size:11px;line-height:11px;font-weight:normal;color:#fff;white-space:nowrap;transform-origin:0 0;transform:scale(0.9583,1.0);">8 000</div>
<div style="position:absolute;left:1032.00px;top:478.45px;font-size:11px;line-height:11px;font-weight:normal;color:#fff;white-space:nowrap;transform-origin:0 0;transform:scale(0.9583,1.0);">7 000</div>
<div style="position:absolute;left:1032.00px;top:504.45px;font-size:11px;line-height:11px;font-weight:normal;color:#fff;white-space:nowrap;transform-origin:0 0;transform:scale(0.9583,1.0);">6 000</div>
<div style="position:absolute;left:1032.00px;top:530.45px;font-size:11px;line-height:11px;font-weight:normal;color:#fff;white-space:nowrap;transform-origin:0 0;transform:scale(0.9583,1.0);">5 000</div>
<div style="position:absolute;left:1032.00px;top:556.45px;font-size:11px;line-height:11px;font-weight:normal;color:#fff;white-space:nowrap;transform-origin:0 0;transform:scale(0.9583,1.0);">4 000</div>
<div style="position:absolute;left:1032.00px;top:582.45px;font-size:11px;line-height:11px;font-weight:normal;color:#fff;white-space:nowrap;transform-origin:0 0;transform:scale(0.9583,1.0);">3 000</div>
<div style="position:absolute;left:1032.00px;top:608.45px;font-size:11px;line-height:11px;font-weight:normal;color:#fff;white-space:nowrap;transform-origin:0 0;transform:scale(0.9583,1.0);">2 000</div>
<div style="position:absolute;left:1032.00px;top:634.45px;font-size:11px;line-height:11px;font-weight:normal;color:#fff;white-space:nowrap;transform-origin:0 0;transform:scale(0.9583,1.0);">1 000</div>
<div style="position:absolute;left:1032.00px;top:660.45px;font-size:11px;line-height:11px;font-weight:normal;color:#fff;white-space:nowrap;transform-origin:0 0;transform:scale(0.9583,1.0);">0</div>
<div style="position:absolute;left:250.00px;top:332.05px;font-size:11px;line-height:11px;font-weight:normal;color:#000;white-space:nowrap;transform-origin:0 0;transform:scale(1.1475,1.0);">4</div>
<div style="position:absolute;left:263.00px;top:332.05px;font-size:11px;line-height:11px;font-weight:normal;color:#000;white-space:nowrap;transform-origin:0 0;transform:scale(1.3115,1.0);">#</div>
<div style="position:absolute;left:1069.5px;top:446px;width:32px;height:12px;transform:rotate(-90deg);transform-origin:50% 50%;color:#fff;font-size:11px;line-height:12px;text-align:center;letter-spacing:0.5px">(RPM)</div>
<div style="position:absolute;left:1127px;top:155px;width:153px;height:585px;box-sizing:border-box;background:#f0f0f0"></div>
<div style="position:absolute;left:1126px;top:155px;width:1px;height:36px;box-sizing:border-box;background:#a0a0a0"></div>
<div style="position:absolute;left:1127px;top:163px;width:155px;height:48px;box-sizing:border-box;border:1px solid #d5d5d5"></div>
<div style="position:absolute;left:1128px;top:164px;width:155px;height:48px;box-sizing:border-box;border:1px solid #fff;border-right:none;border-bottom:none"></div>
<div style="position:absolute;left:1127px;top:211px;width:156px;height:1px;box-sizing:border-box;background:#fff"></div>
<div style="position:absolute;left:1282px;top:163px;width:1px;height:49px;box-sizing:border-box;background:#fff"></div>
<div style="position:absolute;left:1136px;top:160px;width:42px;height:6px;box-sizing:border-box;background:#f0f0f0"></div>
<div style="position:absolute;left:1139.50px;top:157.90px;font-size:12px;line-height:12px;font-weight:bold;color:#000;white-space:nowrap;transform-origin:0 0;transform:scale(0.9033,1.0);">Cursor</div>
<div style="position:absolute;left:1250px;top:156px;width:21px;height:21px;box-sizing:border-box;background:#fff;border-left:2px solid #808080;border-top:1px solid #808080"></div>
<svg style="position:absolute;left:1252px;top:158px;shape-rendering:auto" width="18" height="18" viewBox="0 0 18 18" shape-rendering="crispEdges"><path d="M6.5 7V3.5Q6.5 1.5 8.5 1.5H10.5Q12.5 1.5 12.5 3.5V8.5" fill="none" stroke="#000" stroke-width="3"/><path d="M6.5 6.5V3.5Q6.5 1.5 8.5 1.5H10.5Q12.5 1.5 12.5 3.5V8.5" fill="none" stroke="#c8c8c8" stroke-width="1"/><path d="M3.5 8.5H15.5L16.5 10V14L14.5 16.5H5L2.5 14V10z" fill="#c4c4c4" stroke="#000" stroke-width="1.2"/><path d="M4 11.5H15M4 13.5H15" stroke="#8c8c8c" stroke-width="0.8"/><rect x="8" y="10" width="4" height="2.5" fill="#000"/><rect x="9.2" y="11" width="1.6" height="4" fill="#000"/><path d="M5 2V8M0.5 5.5H5.5M1.5 2.5L5 7M1.5 9L5 7" stroke="#ffff00" stroke-width="1"/></svg>
<div style="position:absolute;left:1131px;top:173px;width:13px;height:13px;box-sizing:border-box;background:#fff;border:1px solid #333"></div>
<div style="position:absolute;left:1148.00px;top:173.90px;font-size:12px;line-height:12px;font-weight:bold;color:#000;white-space:nowrap;transform-origin:0 0;transform:scale(1.0000,1.0);">ORI &gt;&gt; MOD</div>
<div style="position:absolute;left:1131px;top:189px;width:13px;height:13px;box-sizing:border-box;background:#fff;border:1px solid #333"></div>
<svg style="position:absolute;left:1131px;top:189px;shape-rendering:auto" width="13" height="13" viewBox="0 0 13 13" shape-rendering="crispEdges"><path d="M2.5 6.5L5 9.5L10.5 3" fill="none" stroke="#333" stroke-width="1.3"/></svg>
<div style="position:absolute;left:1148.00px;top:189.90px;font-size:12px;line-height:12px;font-weight:bold;color:#000;white-space:nowrap;transform-origin:0 0;transform:scale(0.9916,1.0);">Max var.</div>
<div style="position:absolute;left:1207px;top:186px;width:35px;height:21px;box-sizing:border-box;background:#fff;border:1px solid #7a7a7a"></div>
<div style="position:absolute;left:1210.00px;top:189.90px;font-size:12px;line-height:12px;font-weight:bold;color:#000;white-space:nowrap;transform-origin:0 0;transform:scale(1.0526,1.0);">15</div>
<div style="position:absolute;left:1242px;top:187px;width:14px;height:19px;box-sizing:border-box;background:#e6e6e6;border:1px solid #ababab"></div>
<div style="position:absolute;left:1242px;top:196px;width:14px;height:1px;box-sizing:border-box;background:#ababab"></div>
<svg style="position:absolute;left:1246px;top:190px;shape-rendering:auto" width="5" height="3" viewBox="0 0 5 3" shape-rendering="crispEdges"><path d="M2.5 0L5 3H0z" fill="#000"/></svg>
<svg style="position:absolute;left:1246px;top:200px;shape-rendering:auto" width="5" height="3" viewBox="0 0 5 3" shape-rendering="crispEdges"><path d="M0 0H5L2.5 3z" fill="#000"/></svg>
<div style="position:absolute;left:1127px;top:220px;width:155px;height:220px;box-sizing:border-box;border:1px solid #d5d5d5"></div>
<div style="position:absolute;left:1128px;top:221px;width:155px;height:220px;box-sizing:border-box;border:1px solid #fff;border-right:none;border-bottom:none"></div>
<div style="position:absolute;left:1127px;top:440px;width:156px;height:1px;box-sizing:border-box;background:#fff"></div>
<div style="position:absolute;left:1282px;top:220px;width:1px;height:221px;box-sizing:border-box;background:#fff"></div>
<div style="position:absolute;left:1136px;top:217px;width:47px;height:6px;box-sizing:border-box;background:#f0f0f0"></div>
<div style="position:absolute;left:1139.50px;top:213.90px;font-size:12px;line-height:12px;font-weight:bold;color:#000;white-space:nowrap;transform-origin:0 0;transform:scale(0.9485,1.0);">Display</div>
<div style="position:absolute;left:1133px;top:232px;width:143px;height:30px;box-sizing:border-box;border:1px solid #fff;border-right-color:#a0a0a0;border-bottom-color:#a0a0a0"></div>
<div style="position:absolute;left:1133px;top:262px;width:143px;height:76px;box-sizing:border-box;border:1px solid #fff;border-right-color:#a0a0a0;border-bottom-color:#a0a0a0"></div>
<div style="position:absolute;left:1133px;top:338px;width:143px;height:33px;box-sizing:border-box;border:1px solid #fff;border-right-color:#a0a0a0;border-bottom-color:#a0a0a0"></div>
<svg style="position:absolute;left:1137px;top:241px;shape-rendering:auto" width="13" height="13" viewBox="0 0 13 13" shape-rendering="crispEdges"><circle cx="6.5" cy="6.5" r="6" fill="#fff" stroke="#cfcfcf"/><circle cx="6.5" cy="6.5" r="3.5" fill="#c8c8c8"/></svg>
<div style="position:absolute;left:1153.00px;top:241.90px;font-size:12px;line-height:12px;font-weight:bold;color:#6d6d6d;white-space:nowrap;transform-origin:0 0;transform:scale(0.9890,1.0);">IEEE</div>
<svg style="position:absolute;left:1195px;top:241px;shape-rendering:auto" width="13" height="13" viewBox="0 0 13 13" shape-rendering="crispEdges"><circle cx="6.5" cy="6.5" r="6" fill="#fff" stroke="#cfcfcf"/></svg>
<div style="position:absolute;left:1212.00px;top:241.90px;font-size:12px;line-height:12px;font-weight:bold;color:#6d6d6d;white-space:nowrap;transform-origin:0 0;transform:scale(0.9449,1.0);">Motorola</div>
<svg style="position:absolute;left:1137px;top:267px;shape-rendering:auto" width="13" height="13" viewBox="0 0 13 13" shape-rendering="crispEdges"><circle cx="6.5" cy="6.5" r="6" fill="#fff" stroke="#cfcfcf"/></svg>
<div style="position:absolute;left:1153.00px;top:267.90px;font-size:12px;line-height:12px;font-weight:bold;color:#6d6d6d;white-space:nowrap;transform-origin:0 0;transform:scale(1.0121,1.0);">8 bit</div>
<div style="position:absolute;left:1224px;top:267px;width:13px;height:13px;box-sizing:border-box;background:#fff;border:1px solid #dadada"></div>
<div style="position:absolute;left:1240.00px;top:268.90px;font-size:12px;line-height:12px;font-weight:bold;color:#6d6d6d;white-space:nowrap;transform-origin:0 0;transform:scale(1.1888,1.0);">+/-</div>
<svg style="position:absolute;left:1137px;top:285px;shape-rendering:auto" width="13" height="13" viewBox="0 0 13 13" shape-rendering="crispEdges"><circle cx="6.5" cy="6.5" r="6" fill="#fff" stroke="#cfcfcf"/><circle cx="6.5" cy="6.5" r="3.5" fill="#c8c8c8"/></svg>
<div style="position:absolute;left:1153.00px;top:285.90px;font-size:12px;line-height:12px;font-weight:bold;color:#6d6d6d;white-space:nowrap;transform-origin:0 0;transform:scale(1.0224,1.0);">16 bit</div>
<svg style="position:absolute;left:1137px;top:303px;shape-rendering:auto" width="13" height="13" viewBox="0 0 13 13" shape-rendering="crispEdges"><circle cx="6.5" cy="6.5" r="6" fill="#fff" stroke="#cfcfcf"/></svg>
<div style="position:absolute;left:1153.00px;top:303.90px;font-size:12px;line-height:12px;font-weight:bold;color:#6d6d6d;white-space:nowrap;transform-origin:0 0;transform:scale(1.0224,1.0);">32 bit</div>
<svg style="position:absolute;left:1137px;top:320px;shape-rendering:auto" width="13" height="13" viewBox="0 0 13 13" shape-rendering="crispEdges"><circle cx="6.5" cy="6.5" r="6" fill="#fff" stroke="#cfcfcf"/></svg>
<div style="position:absolute;left:1153.00px;top:320.90px;font-size:12px;line-height:12px;font-weight:bold;color:#6d6d6d;white-space:nowrap;transform-origin:0 0;transform:scale(0.9750,1.0);">Floating Point</div>
<div style="position:absolute;left:1137.00px;top:348.90px;font-size:12px;line-height:12px;font-weight:bold;color:#000;white-space:nowrap;transform-origin:0 0;transform:scale(0.9250,1.0);">Alignment:</div>
<div style="position:absolute;left:1225px;top:345px;width:41px;height:22px;box-sizing:border-box;background:#fff;border:1px solid #606060"></div>
<div style="position:absolute;left:1229.00px;top:349.90px;font-size:12px;line-height:12px;font-weight:bold;color:#000;white-space:nowrap;transform-origin:0 0;transform:scale(1.0448,1.0);">0</div>
<div style="position:absolute;left:1248px;top:348px;width:15px;height:16px;box-sizing:border-box;background:#e6e6e6;border:1px solid #ababab"></div>
<div style="position:absolute;left:1248px;top:356px;width:15px;height:1px;box-sizing:border-box;background:#ababab"></div>
<svg style="position:absolute;left:1253px;top:351px;shape-rendering:auto" width="5" height="3" viewBox="0 0 5 3" shape-rendering="crispEdges"><path d="M2.5 0L5 3H0z" fill="#000"/></svg>
<svg style="position:absolute;left:1253px;top:359px;shape-rendering:auto" width="5" height="3" viewBox="0 0 5 3" shape-rendering="crispEdges"><path d="M0 0H5L2.5 3z" fill="#000"/></svg>
<div style="position:absolute;left:1137px;top:379px;width:13px;height:13px;box-sizing:border-box;background:#fff;border:1px solid #333"></div>
<svg style="position:absolute;left:1137px;top:379px;shape-rendering:auto" width="13" height="13" viewBox="0 0 13 13" shape-rendering="crispEdges"><path d="M2.5 6.5L5 9.5L10.5 3" fill="none" stroke="#333" stroke-width="1.3"/></svg>
<div style="position:absolute;left:1153.00px;top:379.90px;font-size:12px;line-height:12px;font-weight:bold;color:#000;white-space:nowrap;transform-origin:0 0;transform:scale(0.9881,1.0);">Info driver</div>
<div style="position:absolute;left:1137px;top:395px;width:13px;height:13px;box-sizing:border-box;background:#fff;border:1px solid #333"></div>
<svg style="position:absolute;left:1137px;top:395px;shape-rendering:auto" width="13" height="13" viewBox="0 0 13 13" shape-rendering="crispEdges"><path d="M2.5 6.5L5 9.5L10.5 3" fill="none" stroke="#333" stroke-width="1.3"/></svg>
<div style="position:absolute;left:1153.00px;top:395.90px;font-size:12px;line-height:12px;font-weight:bold;color:#000;white-space:nowrap;transform-origin:0 0;transform:scale(0.9865,1.0);">Use last map</div>
<div style="position:absolute;left:1134.00px;top:419.90px;font-size:12px;line-height:12px;font-weight:bold;color:#001040;white-space:nowrap;transform-origin:0 0;transform:scale(1.0300,1.0);">Max</div>
<div style="position:absolute;left:1192px;top:417px;width:77px;height:15px;box-sizing:border-box;background:#e7e7e7;border:1px solid #d6d6d6"></div>
<div style="position:absolute;left:1192px;top:417px;width:9px;height:15px;box-sizing:border-box;background:#0078d7"></div>
<div style="position:absolute;left:1127px;top:661px;width:151px;height:77px;box-sizing:border-box;border:1px solid #d5d5d5"></div>
<div style="position:absolute;left:1128px;top:662px;width:151px;height:77px;box-sizing:border-box;border:1px solid #fff;border-right:none;border-bottom:none"></div>
<div style="position:absolute;left:1127px;top:738px;width:152px;height:1px;box-sizing:border-box;background:#fff"></div>
<div style="position:absolute;left:1278px;top:661px;width:1px;height:78px;box-sizing:border-box;background:#fff"></div>
<div style="position:absolute;left:1135px;top:658px;width:101px;height:6px;box-sizing:border-box;background:#f0f0f0"></div>
<div style="position:absolute;left:1138.00px;top:654.90px;font-size:12px;line-height:12px;font-weight:bold;color:#000020;white-space:nowrap;transform-origin:0 0;transform:scale(0.9856,1.0);">Memo addresses</div>
<div style="position:absolute;left:1137px;top:669px;width:121px;height:71px;box-sizing:border-box;border-left:1px solid #a0a0a0;border-top:1px solid #a0a0a0"></div>
<div style="position:absolute;left:1148.35px;top:677.70px;font-size:12px;line-height:12px;font-weight:bold;color:#a0a0a0;white-space:nowrap;transform-origin:0 0;transform:scale(0.9701,1.0);">1</div>
<div style="position:absolute;left:1171.15px;top:677.70px;font-size:12px;line-height:12px;font-weight:bold;color:#a0a0a0;white-space:nowrap;transform-origin:0 0;transform:scale(0.9701,1.0);">2</div>
<div style="position:absolute;left:1194.05px;top:677.70px;font-size:12px;line-height:12px;font-weight:bold;color:#a0a0a0;white-space:nowrap;transform-origin:0 0;transform:scale(0.9701,1.0);">3</div>
<div style="position:absolute;left:1217.25px;top:677.70px;font-size:12px;line-height:12px;font-weight:bold;color:#a0a0a0;white-space:nowrap;transform-origin:0 0;transform:scale(0.9701,1.0);">4</div>
<div style="position:absolute;left:1240.95px;top:677.70px;font-size:12px;line-height:12px;font-weight:bold;color:#a0a0a0;white-space:nowrap;transform-origin:0 0;transform:scale(0.9701,1.0);">5</div>
<div style="position:absolute;left:1148.35px;top:699.80px;font-size:12px;line-height:12px;font-weight:bold;color:#a0a0a0;white-space:nowrap;transform-origin:0 0;transform:scale(0.9701,1.0);">6</div>
<div style="position:absolute;left:1171.15px;top:699.80px;font-size:12px;line-height:12px;font-weight:bold;color:#a0a0a0;white-space:nowrap;transform-origin:0 0;transform:scale(0.9701,1.0);">7</div>
<div style="position:absolute;left:1194.05px;top:699.80px;font-size:12px;line-height:12px;font-weight:bold;color:#a0a0a0;white-space:nowrap;transform-origin:0 0;transform:scale(0.9701,1.0);">8</div>
<div style="position:absolute;left:1217.25px;top:699.80px;font-size:12px;line-height:12px;font-weight:bold;color:#a0a0a0;white-space:nowrap;transform-origin:0 0;transform:scale(0.9701,1.0);">9</div>
<div style="position:absolute;left:1237.00px;top:699.80px;font-size:12px;line-height:12px;font-weight:bold;color:#a0a0a0;white-space:nowrap;transform-origin:0 0;transform:scale(1.0526,1.0);">10</div>
<div style="position:absolute;left:1144.00px;top:721.80px;font-size:12px;line-height:12px;font-weight:bold;color:#a0a0a0;white-space:nowrap;transform-origin:0 0;transform:scale(1.1024,1.0);">11</div>
<div style="position:absolute;left:1167.80px;top:721.80px;font-size:12px;line-height:12px;font-weight:bold;color:#a0a0a0;white-space:nowrap;transform-origin:0 0;transform:scale(1.0526,1.0);">12</div>
<svg style="position:absolute;left:1189px;top:719px;shape-rendering:auto" width="18" height="18" viewBox="0 0 18 18" shape-rendering="crispEdges"><path d="M7.5 1.5H13.5L16.5 4.5V16.5H7.5z" fill="#fff" stroke="#000" stroke-width="1.2"/><path d="M13.5 1.5V4.5H16.5" fill="none" stroke="#000" stroke-width="0.8"/><path d="M9 4.5H11M11.5 7.5H13.5M9.5 14.5H10.5M11.5 14.5H13.5M13 11.5H14" stroke="#000" stroke-width="1.2"/><path d="M1 9H3.5Q5 7.5 7 8H10.5L11.5 9.5H8.5V10.5H11.5V12H8.5V13.5H6L4 15H1z" fill="#ffff00" stroke="#000" stroke-width="1"/><rect x="1" y="9.5" width="1.6" height="5" fill="#00e0f0"/><path d="M3.5 1.5L11 9.5" stroke="#000" stroke-width="2.4"/><path d="M4.5 2.5L11 9.5" stroke="#ffff00" stroke-width="1" stroke-dasharray="1 1"/><circle cx="3.5" cy="1.8" r="1" fill="#f00"/></svg>
<div style="position:absolute;left:0px;top:693px;width:1127px;height:47px;box-sizing:border-box;background:#f0f0f0"></div>
<div style="position:absolute;left:0px;top:693px;width:1127px;height:1px;box-sizing:border-box;background:#fff"></div>
<div style="position:absolute;left:2px;top:695px;width:22px;height:42px;box-sizing:border-box;background:#e1e1e1;border:1px solid #adadad"></div>
<svg style="position:absolute;left:7px;top:711px;shape-rendering:crispEdges" width="12" height="10" viewBox="0 0 12 10" shape-rendering="crispEdges"><path d="M0.5 5L5 1V9z" fill="#000"/><rect x="7" y="1" width="2" height="8" fill="#0000ff"/></svg>
<div style="position:absolute;left:26px;top:694px;width:748px;height:22px;box-sizing:border-box;background:#f0f0f0;border-top:2px solid #a0a0a0;border-left:1px solid #a0a0a0"></div>
<div style="position:absolute;left:128px;top:696px;width:17px;height:18px;box-sizing:border-box;background:#a6a6a6"></div>
<svg style="position:absolute;left:31px;top:700px;shape-rendering:auto" width="8" height="10" viewBox="0 0 8 10" shape-rendering="crispEdges"><path d="M6 1L2 5L6 9" fill="none" stroke="#606060" stroke-width="1.8"/></svg>
<svg style="position:absolute;left:762px;top:700px;shape-rendering:auto" width="8" height="10" viewBox="0 0 8 10" shape-rendering="crispEdges"><path d="M2 1L6 5L2 9" fill="none" stroke="#606060" stroke-width="1.8"/></svg>
<div style="position:absolute;left:26px;top:717px;width:748px;height:22px;box-sizing:border-box;background:#f0f0f0;border-top:2px solid #a0a0a0;border-left:1px solid #a0a0a0"></div>
<div style="position:absolute;left:128px;top:719px;width:17px;height:18px;box-sizing:border-box;background:#cdcdcd"></div>
<svg style="position:absolute;left:31px;top:723px;shape-rendering:auto" width="8" height="10" viewBox="0 0 8 10" shape-rendering="crispEdges"><path d="M6 1L2 5L6 9" fill="none" stroke="#606060" stroke-width="1.8"/></svg>
<svg style="position:absolute;left:762px;top:723px;shape-rendering:auto" width="8" height="10" viewBox="0 0 8 10" shape-rendering="crispEdges"><path d="M2 1L6 5L2 9" fill="none" stroke="#606060" stroke-width="1.8"/></svg>
<div style="position:absolute;left:776px;top:695px;width:22px;height:42px;box-sizing:border-box;background:#e1e1e1;border:1px solid #adadad"></div>
<div style="position:absolute;left:800px;top:695px;width:22px;height:42px;box-sizing:border-box;background:#e1e1e1;border:1px solid #adadad"></div>
<div style="position:absolute;left:824px;top:695px;width:22px;height:42px;box-sizing:border-box;background:#e1e1e1;border:1px solid #adadad"></div>
<svg style="position:absolute;left:781px;top:711px;shape-rendering:crispEdges" width="12" height="10" viewBox="0 0 12 10" shape-rendering="crispEdges"><rect x="0" y="1" width="2" height="8" fill="#0000ff"/><path d="M4 1L8.5 5L4 9z" fill="#000"/></svg>
<svg style="position:absolute;left:805px;top:711px;shape-rendering:crispEdges" width="14" height="10" viewBox="0 0 14 10" shape-rendering="crispEdges"><path d="M0.5 5L5 1V9z" fill="#000"/><rect x="6" y="1" width="2" height="8" fill="#0000ff"/><rect x="9" y="1" width="2" height="8" fill="#ff0000"/></svg>
<svg style="position:absolute;left:829px;top:711px;shape-rendering:crispEdges" width="14" height="10" viewBox="0 0 14 10" shape-rendering="crispEdges"><rect x="0" y="1" width="2" height="8" fill="#ff0000"/><rect x="3" y="1" width="2" height="8" fill="#0000ff"/><path d="M6 1L10.5 5L6 9z" fill="#000"/></svg>
<div style="position:absolute;left:850px;top:695px;width:22px;height:42px;box-sizing:border-box;background:#cccccc;border:1px solid #c0c0c0"></div>
<div style="position:absolute;left:874px;top:695px;width:22px;height:42px;box-sizing:border-box;background:#cccccc;border:1px solid #c0c0c0"></div>
<svg style="position:absolute;left:853px;top:708px;shape-rendering:auto" width="16" height="16" viewBox="0 0 16 16" shape-rendering="crispEdges"><path d="M0.5 1V14" stroke="#000" stroke-width="1.2"/><path d="M3 4H15M3 9H15" stroke="#9a9a9a" stroke-width="2.5"/><path d="M6 2V6M10 7V11" stroke="#9a9a9a" stroke-width="2"/><path d="M3 14H15" stroke="#9a9a9a" stroke-dasharray="1 1"/></svg>
<svg style="position:absolute;left:877px;top:708px;shape-rendering:auto" width="16" height="16" viewBox="0 0 16 16" shape-rendering="crispEdges"><path d="M15.5 1V14" stroke="#000" stroke-width="1.2"/><path d="M1 4H13M1 9H13" stroke="#9a9a9a" stroke-width="2.5"/><path d="M10 2V6M6 7V11" stroke="#9a9a9a" stroke-width="2"/><path d="M1 14H13" stroke="#9a9a9a" stroke-dasharray="1 1"/></svg>
<div style="position:absolute;left:900px;top:695px;width:58px;height:20px;box-sizing:border-box;background:#e1e1e1;border:1px solid #adadad"></div>
<div style="position:absolute;left:900px;top:717px;width:58px;height:20px;box-sizing:border-box;background:#e1e1e1;border:1px solid #adadad"></div>
<svg style="position:absolute;left:903px;top:696px;shape-rendering:auto" width="18" height="18" viewBox="0 0 18 18" shape-rendering="crispEdges"><path d="M6.5 7V3.5Q6.5 1.5 8.5 1.5H10.5Q12.5 1.5 12.5 3.5V8.5" fill="none" stroke="#000" stroke-width="3"/><path d="M6.5 6.5V3.5Q6.5 1.5 8.5 1.5H10.5Q12.5 1.5 12.5 3.5V8.5" fill="none" stroke="#c8c8c8" stroke-width="1"/><path d="M3.5 8.5H15.5L16.5 10V14L14.5 16.5H5L2.5 14V10z" fill="#c4c4c4" stroke="#000" stroke-width="1.2"/><path d="M4 11.5H15M4 13.5H15" stroke="#8c8c8c" stroke-width="0.8"/><rect x="8" y="10" width="4" height="2.5" fill="#000"/><rect x="9.2" y="11" width="1.6" height="4" fill="#000"/><path d="M5 2V8M0.5 5.5H5.5M1.5 2.5L5 7M1.5 9L5 7" stroke="#ffff00" stroke-width="1"/></svg>
<svg style="position:absolute;left:903px;top:718px;shape-rendering:auto" width="18" height="18" viewBox="0 0 18 18" shape-rendering="crispEdges"><path d="M6.5 7V3.5Q6.5 1.5 8.5 1.5H10.5Q12.5 1.5 12.5 3.5V8.5" fill="none" stroke="#000" stroke-width="3"/><path d="M6.5 6.5V3.5Q6.5 1.5 8.5 1.5H10.5Q12.5 1.5 12.5 3.5V8.5" fill="none" stroke="#c8c8c8" stroke-width="1"/><path d="M3.5 8.5H15.5L16.5 10V14L14.5 16.5H5L2.5 14V10z" fill="#c4c4c4" stroke="#000" stroke-width="1.2"/><path d="M4 11.5H15M4 13.5H15" stroke="#8c8c8c" stroke-width="0.8"/><rect x="8" y="10" width="4" height="2.5" fill="#000"/><rect x="9.2" y="11" width="1.6" height="4" fill="#000"/><path d="M5 2V8M0.5 5.5H5.5M1.5 2.5L5 7M1.5 9L5 7" stroke="#ffff00" stroke-width="1"/></svg>
<div style="position:absolute;left:925.00px;top:698.90px;font-size:12px;line-height:12px;font-weight:bold;color:#000;white-space:nowrap;transform-origin:0 0;transform:scale(0.9859,1.0);">ORI</div>
<div style="position:absolute;left:925.00px;top:720.90px;font-size:12px;line-height:12px;font-weight:bold;color:#000;white-space:nowrap;transform-origin:0 0;transform:scale(0.9286,1.0);">MOD</div>
<div style="position:absolute;left:961px;top:695px;width:44px;height:20px;box-sizing:border-box;background:#e1e1e1;border:1px solid #adadad"></div>
<div style="position:absolute;left:1007px;top:695px;width:44px;height:20px;box-sizing:border-box;background:#e1e1e1;border:1px solid #adadad"></div>
<svg style="position:absolute;left:975px;top:701px;shape-rendering:crispEdges" width="18" height="10" viewBox="0 0 18 10" shape-rendering="crispEdges"><path d="M0.5 5L5 1V9z" fill="#000"/><rect x="6" y="1" width="2" height="8" fill="#0000ff"/></svg>
<div style="position:absolute;left:985.00px;top:700.05px;font-size:11px;line-height:11px;font-weight:bold;color:#000;white-space:nowrap;transform-origin:0 0;transform:scale(0.9783,1.0);">M</div>
<div style="position:absolute;left:1021.00px;top:700.05px;font-size:11px;line-height:11px;font-weight:bold;color:#000;white-space:nowrap;transform-origin:0 0;transform:scale(0.9783,1.0);">M</div>
<svg style="position:absolute;left:1031px;top:701px;shape-rendering:crispEdges" width="12" height="10" viewBox="0 0 12 10" shape-rendering="crispEdges"><rect x="0" y="1" width="2" height="8" fill="#0000ff"/><path d="M3 1L7.5 5L3 9z" fill="#000"/></svg>
<div style="position:absolute;left:961px;top:716px;width:65px;height:21px;box-sizing:border-box;background:#fff;border:1px solid #7a7a7a"></div>
<div style="position:absolute;left:965.00px;top:719.90px;font-size:12px;line-height:12px;font-weight:bold;color:#000;white-space:nowrap;transform-origin:0 0;transform:scale(0.9912,1.0);">02E6DC</div>
<div style="position:absolute;left:1030px;top:717px;width:21px;height:20px;box-sizing:border-box;background:#e1e1e1;border:1px solid #adadad"></div>
<div style="position:absolute;left:1033.00px;top:721.90px;font-size:12px;line-height:12px;font-weight:bold;color:#002040;white-space:nowrap;transform-origin:0 0;transform:scale(0.8021,1.0);">GO</div>
<div style="position:absolute;left:1054px;top:695px;width:22px;height:42px;box-sizing:border-box;background:#e1e1e1;border:1px solid #adadad"></div>
<div style="position:absolute;left:1078px;top:695px;width:22px;height:42px;box-sizing:border-box;background:#e1e1e1;border:1px solid #adadad"></div>
<div style="position:absolute;left:1102px;top:695px;width:22px;height:42px;box-sizing:border-box;background:#e1e1e1;border:1px solid #adadad"></div>
<svg style="position:absolute;left:1056px;top:708px;shape-rendering:crispEdges" width="18" height="17" viewBox="0 0 18 17" shape-rendering="crispEdges"><rect x="3" y="3" width="13" height="2" fill="#0000ff"/><rect x="5" y="1" width="4" height="6" fill="#0000ff"/><rect x="3" y="9" width="13" height="2" fill="#ff0000"/><rect x="5" y="7" width="4" height="6" fill="#ff0000"/><path d="M2.5 1V13.5H16" fill="none" stroke="#000"/><path d="M1 2.5H2M1 4.5H2M1 6.5H2M1 8.5H2M1 10.5H2M1 12.5H2M4.5 14V15M6.5 14V15M8.5 14V15M10.5 14V15M12.5 14V15M14.5 14V15" stroke="#404040"/></svg>
<svg style="position:absolute;left:1081px;top:711px;shape-rendering:crispEdges" width="16" height="10" viewBox="0 0 16 10" shape-rendering="crispEdges"><rect x="1" y="1" width="2" height="8" fill="#000"/><path d="M3.5 5L8 1V9z M8.5 5L13 1V9z" fill="#000"/></svg>
<svg style="position:absolute;left:1105px;top:711px;shape-rendering:crispEdges" width="16" height="10" viewBox="0 0 16 10" shape-rendering="crispEdges"><path d="M1 1L5.5 5L1 9z M6 1L10.5 5L6 9z" fill="#000"/><rect x="11" y="1" width="2" height="8" fill="#000"/></svg>
<div style="position:absolute;left:0px;top:738px;width:1280px;height:22px;box-sizing:border-box;background:#f0f0f0"></div>
<div style="position:absolute;left:0px;top:738px;width:1127px;height:1px;box-sizing:border-box;background:#fff"></div>
<div style="position:absolute;left:0px;top:739px;width:1127px;height:1px;box-sizing:border-box;background:#a0a0a0"></div>
<div style="position:absolute;left:1127px;top:740px;width:153px;height:1px;box-sizing:border-box;background:#c8c8c8"></div>
<div style="position:absolute;left:1126px;top:693px;width:1px;height:47px;box-sizing:border-box;background:#a0a0a0"></div>
<div style="position:absolute;left:0px;top:759px;width:1280px;height:1px;box-sizing:border-box;background:#fff"></div>
<div style="position:absolute;left:669px;top:741px;width:1px;height:18px;box-sizing:border-box;background:#d8d8d8"></div>
<div style="position:absolute;left:569px;top:741px;width:1px;height:18px;box-sizing:border-box;background:#d8d8d8"></div>
<div style="position:absolute;left:441px;top:760px;width:48px;height:5px;box-sizing:border-box;background:#3c3c40"></div>
<div style="position:absolute;left:349px;top:742px;width:1px;height:17px;box-sizing:border-box;background:#d8d8d8"></div>
<div style="position:absolute;left:674.00px;top:744.90px;font-size:12px;line-height:12px;font-weight:normal;color:#000;white-space:nowrap;transform-origin:0 0;transform:scale(0.9828,1.0);">Checksum: NO</div>
<div style="position:absolute;left:0px;top:760px;width:1280px;height:5px;box-sizing:border-box;background:#0c1014"></div>
<!--BODY-->
</body></html>
